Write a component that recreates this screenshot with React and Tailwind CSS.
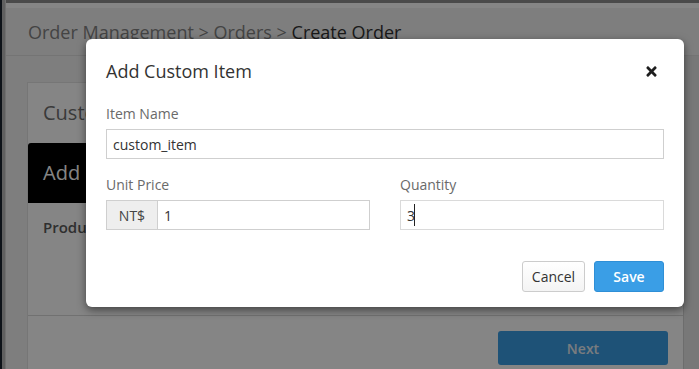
import { FaTimes } from "react-icons/fa";

const font = { fontFamily: '"Open Sans", "Liberation Sans", sans-serif' };

const Field = ({ label, children }) => (
  <div className="flex flex-col">
    <label className="text-[14px] leading-[20px] text-[#6a6a6a] mb-[5px]">{label}</label>
    {children}
  </div>
);

const PageBehind = () => (
  <div className="flex w-full h-full">
    <div className="w-[6px] h-full flex shrink-0">
      <div className="w-[2px] bg-[#1c2630]" />
      <div className="flex-1 bg-[#b8b8b8] border-r border-[#d6d6d6]" />
    </div>
    <div className="flex-1 flex flex-col min-h-0">
      <div className="h-[3px] shrink-0 bg-[#8e8e8e]" />
      <div className="h-[5px] shrink-0 bg-white" />
      <div className="h-[48px] shrink-0 bg-[#f2f2f2] border-b border-[#dedede] pl-[22px] pt-[12px]">
        <p className="text-[18px] leading-[24px] text-[#828282]">
          Order Management &gt; Orders &gt; <span className="text-[#333]">Create Order</span>
        </p>
      </div>
      <div className="flex-1 min-h-0 flex bg-[#f2f2f2]">
        <div className="flex-1 pl-[21px] pt-[26px] flex">
          <div className="flex-1 flex flex-col bg-white border-l border-t border-[#e2e2e2]">
            <div className="h-[60px] shrink-0 pl-[15px] flex items-center">
              <h3 className="text-[20px] text-[#6f6f6f]">Customer Info</h3>
            </div>
            <div className="h-[60px] shrink-0 bg-black rounded-tl-[3px] pl-[15px] flex items-center">
              <h3 className="text-[20px] text-white">Add Items</h3>
            </div>
            <div className="h-[112px] shrink-0 pl-[15px] pt-[13px]">
              <p className="text-[15px] font-semibold text-[#5a5a5a]">Products</p>
            </div>
            <div className="flex-1 min-h-0 border-t border-[#d8d8d8] flex justify-end pr-[15px] pt-[15px]">
              <button className="w-[170px] h-[34px] shrink-0 bg-[#3a9de4] rounded-[3px] text-[#e8eef4] text-[14px] font-semibold">
                Next
              </button>
            </div>
          </div>
        </div>
        <div className="w-[16px] bg-[#e6e6e6] border-l border-[#d2d2d2]" />
      </div>
    </div>
  </div>
);

export default function App() {
  return (
    <div className="relative w-[699px] h-[369px] overflow-hidden bg-[#f2f2f2]" style={font}>
      <PageBehind />
      <div className="absolute inset-0 bg-black/[0.48]" />

      <div className="absolute left-[86px] top-[39px] w-[598px] bg-white rounded-[6px] shadow-[0_3px_9px_rgba(0,0,0,0.5)] px-[20px] pt-[20px] pb-[15px]">
        <div className="flex items-center justify-between h-[24px]">
          <h4 className="text-[18px] leading-[24px] text-[#333]">Add Custom Item</h4>
          <button className="mr-[5px] text-[#1e1e1e]">
            <FaTimes size={15} />
          </button>
        </div>

        <div className="mt-[21px]">
          <Field label="Item Name">
            <input
              readOnly
              value="custom_item"
              className="h-[30px] w-full border border-[#cfcfcf] px-[6px] text-[14px] text-[#333] outline-none"
            />
          </Field>
        </div>

        <div className="mt-[16px] grid grid-cols-2 gap-[30px]">
          <Field label="Unit Price">
            <div className="flex h-[30px]">
              <span className="w-[52px] flex items-center justify-center bg-[#eeeeee] border border-[#cfcfcf] text-[14px] text-[#444]">
                NT$
              </span>
              <input
                readOnly
                value="1"
                className="flex-1 min-w-0 border border-l-0 border-[#cfcfcf] px-[6px] text-[14px] text-[#333] outline-none"
              />
            </div>
          </Field>
          <Field label="Quantity">
            <div className="relative h-[30px]">
              <input
                readOnly
                value="3"
                className="h-full w-full border border-[#dadada] px-[6px] text-[14px] text-[#333] outline-none"
              />
              <span className="absolute left-[14px] top-[4px] w-px h-[22px] bg-[#222]" />
            </div>
          </Field>
        </div>

        <div className="mt-[31px] flex justify-end gap-[9px]">
          <button className="w-[63px] h-[31px] border border-[#cccccc] rounded-[3px] bg-gradient-to-b from-white to-[#f4f4f4] text-[14px] text-[#333]">
            Cancel
          </button>
          <button className="w-[70px] h-[31px] border border-[#2f8fd6] rounded-[3px] bg-[#3a9ee6] text-[14px] font-semibold text-white">
            Save
          </button>
        </div>
      </div>
    </div>
  );
}
